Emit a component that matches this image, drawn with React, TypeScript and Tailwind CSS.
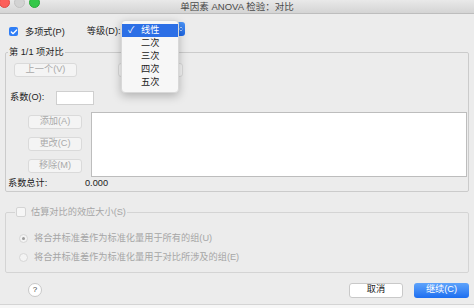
import { Check } from "lucide-react";

function MacButton({ label, width, disabled = true }: { label?: string; width: string; disabled?: boolean }) {
  return (
    <div
      className={`${width} h-[14px] flex items-center justify-center rounded-[3px] border border-[#dadada] bg-[#f4f4f4] ${
        disabled ? "text-[#a9a9a9]" : "text-[#222]"
      }`}
    >
      {label}
    </div>
  );
}

function Radio({ checked, label }: { checked?: boolean; label: string }) {
  return (
    <div className="flex items-center h-[12px] ml-[13px]">
      <span className="w-[9px] h-[9px] rounded-full border border-[#d6d6d6] bg-[#f3f3f3] flex items-center justify-center">
        {checked && <span className="w-[3px] h-[3px] rounded-full bg-[#9a9a9a]" />}
      </span>
      <span className="ml-[6px] text-[#a6a6a6] leading-[12px]">{label}</span>
    </div>
  );
}

export default function App() {
  return (
    <div className="w-[474px] h-[308px] overflow-hidden bg-[#f7f7f7] text-[9.2px] text-[#222] font-['Liberation_Sans','Noto_Sans_CJK_SC',sans-serif]">
      <div className="relative h-[305px] bg-[#ececec] border-b border-[#d4d4d4]">
        {/* Title bar */}
        <div className="relative h-[14px] bg-gradient-to-b from-[#e9e9e9] to-[#d4d4d4] border-b border-[#bdbdbd] flex items-center justify-center">
          <div className="absolute left-[-1px] top-[-3px] flex gap-[4px]">
            <span className="w-[11px] h-[11px] rounded-full bg-[#fc605b] border border-[#de4a44]" />
            <span className="w-[11px] h-[11px] rounded-full bg-[#d3d3d3] border border-[#c2c2c2]" />
            <span className="w-[11px] h-[11px] rounded-full bg-[#34c84a] border border-[#27aa37]" />
          </div>
          <span className="text-[9.5px] text-[#4a4a4a] leading-[14px]">单因素 ANOVA 检验：对比</span>
        </div>

        {/* Polynomial row */}
        <div className="flex items-start mt-[8px] h-[16px]">
          <span className="ml-[9px] mt-[5px] w-[9px] h-[9px] rounded-[2px] bg-[#2f7ef6] flex items-center justify-center">
            <Check className="w-[8px] h-[8px] text-white" strokeWidth={4} />
          </span>
          <span className="ml-[7px] mt-[3px] leading-[14px]">多项式(P)</span>
          <span className="ml-[22px] mt-[2px] leading-[14px]">等级(D):</span>
          <div className="ml-[3px] w-[61px] h-[14px] rounded-[3px] bg-gradient-to-b from-[#4a93f8] to-[#1d67e6] flex items-center justify-end pr-[2px]">
            <svg viewBox="0 0 6 10" className="w-[4px] h-[8px]" fill="none" stroke="#cfe0ff" strokeWidth="1.2">
              <path d="M1 4 L3 2 L5 4 M1 6 L3 8 L5 6" />
            </svg>
          </div>
        </div>

        {/* Contrast group */}
        <fieldset className="mx-[5px] mt-[8px] border border-[#cbcbcb] rounded-[2px] pb-[1px]">
          <legend className="ml-[2px] px-[1px] leading-[12px] text-[#1f1f1f]">第 1/1 项对比</legend>
          <div className="flex mt-[5px] ml-[8px] gap-[41px]">
            <MacButton label="上一个(V)" width="w-[63px]" />
            {/* next button, covered by the open popup */}
            <MacButton width="w-[65px]" />
          </div>
          <div className="flex items-center mt-[14px] h-[14px] ml-[4px]">
            <span className="w-[46px]">系数(O):</span>
            <div className="w-[38px] h-[14px] bg-white border border-[#cfcfcf]" />
          </div>
          <div className="flex mt-[7px]">
            <div className="ml-[22px] w-[54px] pt-[3px] flex flex-col gap-[8px]">
              <MacButton label="添加(A)" width="w-[54px]" />
              <MacButton label="更改(C)" width="w-[54px]" />
              <MacButton label="移除(M)" width="w-[54px]" />
            </div>
            <div className="flex-1 ml-[9px] mr-[1px] h-[65px] bg-white border border-[#bdbdbd]" />
          </div>
          <div className="flex items-center h-[12px] mt-[1px] ml-[2px]">
            <span className="w-[77px]">系数总计:</span>
            <span>0.000</span>
          </div>
        </fieldset>

        {/* Effect size group */}
        <fieldset className="mx-[5px] mt-[13px] border border-[#d4d4d4] rounded-[2px] pb-[9px]">
          <legend className="ml-[9px] px-[1px] flex items-center leading-[14px]">
            <span className="w-[10px] h-[10px] rounded-[2px] border border-[#d4d4d4] bg-[#f6f6f6]" />
            <span className="ml-[5px] text-[#a6a6a6]">估算对比的效应大小(S)</span>
          </legend>
          <div className="mt-[13px]">
            <Radio checked label="将合并标准差作为标准化量用于所有的组(U)" />
          </div>
          <div className="mt-[7px]">
            <Radio label="将合并标准差作为标准化量用于对比所涉及的组(E)" />
          </div>
        </fieldset>

        {/* Bottom buttons */}
        <div className="flex items-center mt-[9px] h-[16px]">
          <span className="ml-[28px] w-[14px] h-[14px] rounded-full bg-white border border-[#c8c8c8] flex items-center justify-center text-[8px] text-[#444] leading-none">
            ?
          </span>
          <div className="ml-auto w-[54px] h-[15px] rounded-[3px] bg-white border border-[#c9c9c9] flex items-center justify-center">
            取消
          </div>
          <div className="ml-[11px] mr-[5px] w-[55px] h-[15px] rounded-[3px] bg-gradient-to-b from-[#5ea3fb] to-[#1c6ef0] text-white flex items-center justify-center">
            继续(C)
          </div>
        </div>

        {/* Open level popup menu */}
        <div className="absolute left-[121px] top-[20px] w-[58px] py-[3px] bg-[#f7f7f7] rounded-[4px] shadow-[0_3px_10px_rgba(0,0,0,0.25)] border border-[#d8d8d8]">
          <div className="h-[13px] bg-[#2c6fe6] text-white flex items-center">
            <span className="ml-[6px] w-[13px]">✓</span>
            <span>线性</span>
          </div>
          {["二次", "三次", "四次", "五次"].map((t) => (
            <div key={t} className="h-[13px] flex items-center pl-[19px] text-[#222]">
              {t}
            </div>
          ))}
        </div>
      </div>
    </div>
  );
}
